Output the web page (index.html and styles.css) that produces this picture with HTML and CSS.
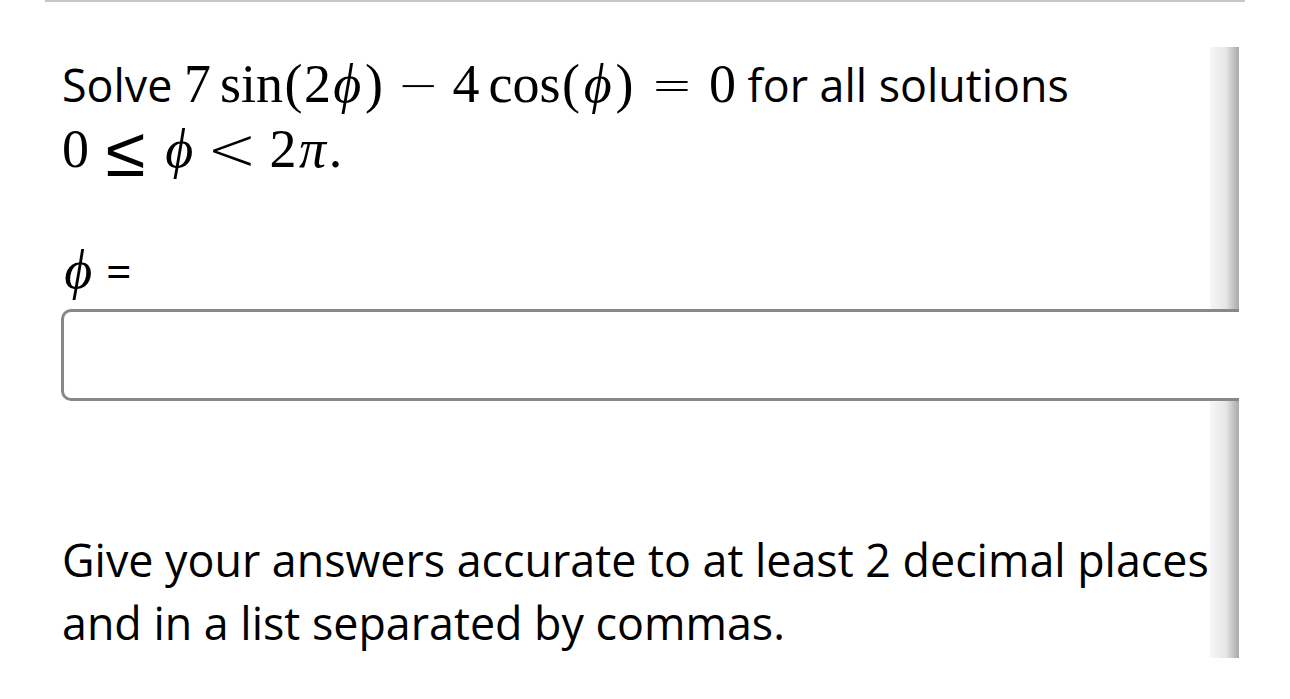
FILE: index.html
```html
<!DOCTYPE html>
<html lang="en">
<head>
<meta charset="utf-8">
<title>Question</title>
<link rel="stylesheet" href="styles.css">
</head>
<body>
<div class="rule"></div>
<div class="panel">
  <p class="question">Solve <span class="math">7<span class="thin"></span>sin<span class="p">(</span>2<i class="mi">ϕ</i><span class="p">)</span><span class="bin">−</span>4<span class="thin"></span>cos<span class="p">(</span><i class="mi">ϕ</i><span class="p">)</span><span class="rel">=</span>0</span> for all solutions <span class="math">0<span class="rel"><span class="le">≤</span></span><i class="mi">ϕ</i><span class="rel"><span class="lt">&lt;</span></span>2<i class="mi">π</i>.</span></p>
  <p class="label"><span class="math"><i class="mi">ϕ</i></span> =</p>
  <div class="answer"></div>
  <p class="hint">Give your answers accurate to at least 2 decimal places and in a list separated by commas.</p>
</div>
</body>
</html>
```

FILE: styles.css
```css
html, body {
  margin: 0;
  padding: 0;
  background: #ffffff;
}

body {
  font-family: "Open Sans", "Noto Sans", sans-serif;
  color: #000000;
  font-size: 44.8px;
}

.rule {
  height: 2px;
  margin: 0 45px;
  background: #c8c8c8;
}

.panel {
  margin-top: 45px;
  width: 1239px;
  box-sizing: border-box;
  padding: 5px 15px 4px 62px;
  overflow: hidden;
  background: linear-gradient(to right, #f7f7f7 0%, #e6e6e6 55%, #a8a8a8 100%) right top / 29px 100% no-repeat;
}

.question {
  margin: 0;
  line-height: 65px;
}

.math {
  font-family: "Liberation Serif", "DejaVu Serif", serif;
  font-size: 54px;
  line-height: 1;
  white-space: nowrap;
}

.mi {
  font-style: italic;
  display: inline-block;
  width: 0.6em;
  text-align: center;
}

.p {
  display: inline-block;
  width: 0.39em;
  text-align: center;
}

.thin { display: inline-block; width: 9px; }

.bin,
.rel {
  display: inline-block;
  width: 42px;
  font-family: "DejaVu Sans", sans-serif;
  font-weight: 200;
  font-size: 50px;
  text-align: center;
}

.bin { margin: 0 13px; }
.rel { margin: 0 16px; }

.le {
  display: inline-block;
  transform: translateY(2px) scale(1.45, 1.4);
}

.lt {
  display: inline-block;
  transform: scale(1.2);
}

.label {
  margin: 57px 0 0;
  line-height: 63px;
}

.answer {
  margin: 7px 0 0 -1px;
  width: calc(100% + 40px);
  height: 92px;
  box-sizing: border-box;
  border: 3px solid #888888;
  border-radius: 10px;
  background: #ffffff;
}

.hint {
  margin: 127px 0 0;
  line-height: 63px;
}
```
